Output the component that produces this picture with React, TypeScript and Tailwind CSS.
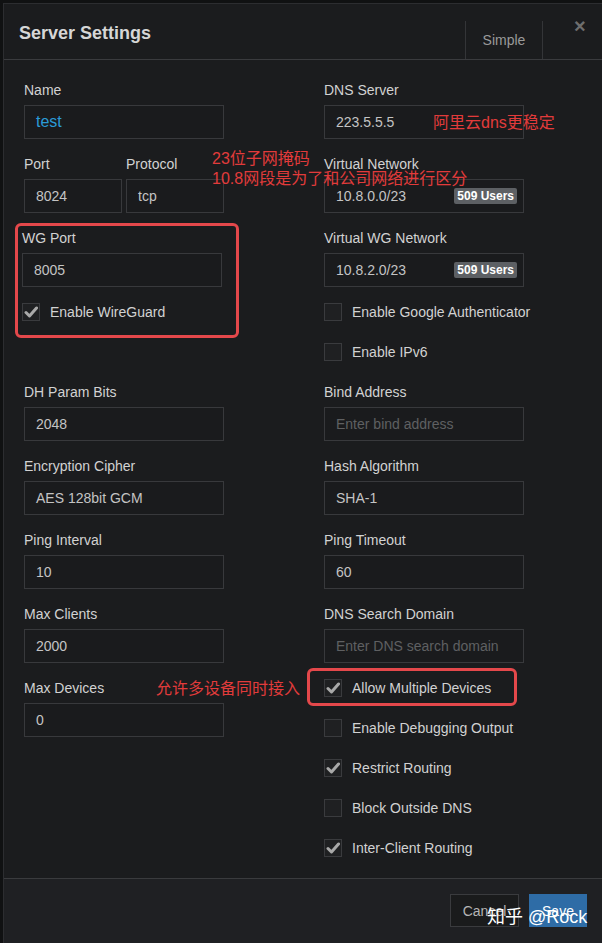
import React from "react";

const font = { fontFamily: '"Liberation Sans", Arial, sans-serif' };
const cjk = { fontFamily: '"Liberation Sans", "Noto Sans CJK SC", sans-serif' };

type FieldProps = {
  label: string;
  value?: string;
  placeholder?: string;
  blue?: boolean;
  badge?: string;
};

const Field = ({ label, value, placeholder, blue, badge }: FieldProps) => (
  <div>
    <div className="h-5 leading-5 text-sm text-[#d2d2d2] mb-[5px]">{label}</div>
    <div className="w-[200px] h-[34px] border border-[#38393c] bg-[#1a1b1d] pl-[11px] pr-[6px] flex items-center justify-between">
      {value ? (
        <span className={blue ? "text-base text-[#2b9ad6]" : "text-sm text-[#c4c4c4]"}>{value}</span>
      ) : (
        <span className="text-sm text-[#5f6062]">{placeholder}</span>
      )}
      {badge && (
        <span className="bg-[#5d6064] text-white text-xs font-bold px-[3px] h-4 leading-4 rounded-[2px]">
          {badge}
        </span>
      )}
    </div>
  </div>
);

const Check = ({ label, checked }: { label: string; checked?: boolean }) => (
  <div className="h-5 flex items-center gap-[10px]">
    <div className="w-[18px] h-[18px] border border-[#3a3b3e] bg-[#1f2022] flex items-center justify-center">
      {checked && (
        <svg width="14" height="14" viewBox="0 0 14 14">
          <path d="M2 7.5 L5.5 11 L12.5 3" fill="none" stroke="#a9a9a9" strokeWidth="3" strokeLinecap="round" strokeLinejoin="round" />
        </svg>
      )}
    </div>
    <span className="text-sm text-[#d2d2d2]">{label}</span>
  </div>
);

const Row = ({ children, mb = "mb-[15px]" }: { children: React.ReactNode; mb?: string }) => (
  <div className={`grid grid-cols-[300px_1fr] ${mb}`}>{children}</div>
);

export default function App() {
  return (
    <div className="w-[602px] h-[943px] bg-[#101112] pl-[3px] pt-[3px] overflow-hidden" style={font}>
      <div className="relative h-[940px] bg-[#1b1c1e] border-l border-t border-[#2c2d30] flex flex-col">
        {/* header */}
        <div className="h-[56px] border-b border-[#3a3b3e] flex items-start">
          <h4 className="pl-[15px] pt-[16px] text-[18px] font-bold text-[#d6d6d6] flex-1">Server Settings</h4>
          <div className="mt-[17px] h-[38px] w-[78px] border-l border-r border-[#343538] flex items-center justify-center text-sm text-[#9a9a9a]">
            Simple
          </div>
          <div className="w-[59px] pt-[12px] pl-[31px]">
            <span className="text-xl font-bold text-[#6e6e6e] leading-none">×</span>
          </div>
        </div>

        {/* body */}
        <div className="pl-[20px] pt-[20px] pb-[20px] flex-1">
          <Row>
            <Field label="Name" value="test" blue />
            <Field label="DNS Server" value="223.5.5.5" />
          </Row>
          <Row>
            <div>
              <div className="flex gap-1 h-5 leading-5 text-sm text-[#d2d2d2] mb-[5px]">
                <span className="w-[98px]">Port</span>
                <span>Protocol</span>
              </div>
              <div className="flex gap-1">
                <div className="w-[98px] h-[34px] border border-[#38393c] bg-[#1a1b1d] pl-[11px] flex items-center text-sm text-[#c4c4c4]">8024</div>
                <div className="w-[98px] h-[34px] border border-[#38393c] bg-[#1a1b1d] pl-[11px] flex items-center text-sm text-[#c4c4c4]">tcp</div>
              </div>
            </div>
            <Field label="Virtual Network" value="10.8.0.0/23" badge="509 Users" />
          </Row>
          <Row mb="mb-[20px]">
            <div className="relative -ml-[2px]">
              <Field label="WG Port" value="8005" />
              <div className="mt-[15px]">
                <Check label="Enable WireGuard" checked />
              </div>
              <div className="absolute -left-[7px] -top-[5px] w-[224px] h-[115px] border-[3px] border-[#e4484b] rounded-md" />
            </div>
            <div>
              <Field label="Virtual WG Network" value="10.8.2.0/23" badge="509 Users" />
              <div className="mt-[15px] flex flex-col gap-5">
                <Check label="Enable Google Authenticator" />
                <Check label="Enable IPv6" />
              </div>
            </div>
          </Row>
          <Row>
            <Field label="DH Param Bits" value="2048" />
            <Field label="Bind Address" placeholder="Enter bind address" />
          </Row>
          <Row>
            <Field label="Encryption Cipher" value="AES 128bit GCM" />
            <Field label="Hash Algorithm" value="SHA-1" />
          </Row>
          <Row>
            <Field label="Ping Interval" value="10" />
            <Field label="Ping Timeout" value="60" />
          </Row>
          <Row>
            <Field label="Max Clients" value="2000" />
            <Field label="DNS Search Domain" placeholder="Enter DNS search domain" />
          </Row>
          <Row mb="mb-0">
            <Field label="Max Devices" value="0" />
            <div className="flex flex-col gap-5">
              <div className="relative">
                <Check label="Allow Multiple Devices" checked />
                <div className="absolute -left-[17px] -top-[10px] w-[210px] h-[38px] border-[3px] border-[#e4484b] rounded-md" />
              </div>
              <Check label="Enable Debugging Output" />
              <Check label="Restrict Routing" checked />
              <Check label="Block Outside DNS" />
              <Check label="Inter-Client Routing" checked />
            </div>
          </Row>
        </div>

        {/* footer */}
        <div className="h-[65px] border-t border-[#3a3b3e] bg-[#1f2023] flex justify-end items-start pt-[15px] pr-[15px] gap-[10px]">
          <button className="w-[69px] h-[33px] border border-[#3a3b3e] bg-[#1a1b1c] text-sm text-[#b4b4b4]">Cancel</button>
          <button className="w-[58px] h-[33px] bg-[#2e6ca6] text-sm text-white">Save</button>
        </div>

        {/* annotations */}
        <div className="absolute left-[429px] top-[109px] text-base leading-5 text-[#e23b3b]" style={cjk}>阿里云dns更稳定</div>
        <div className="absolute left-[208px] top-[145px] text-base leading-5 text-[#e23b3b]" style={cjk}>
          23位子网掩码
          <br />
          10.8网段是为了和公司网络进行区分
        </div>
        <div className="absolute left-[152px] top-[675px] text-base leading-5 text-[#e23b3b]" style={cjk}>允许多设备同时接入</div>
        <div className="absolute left-[483px] top-[901px] text-[18px] leading-6 text-white" style={cjk}>知乎 @Rock</div>
      </div>
    </div>
  );
}
